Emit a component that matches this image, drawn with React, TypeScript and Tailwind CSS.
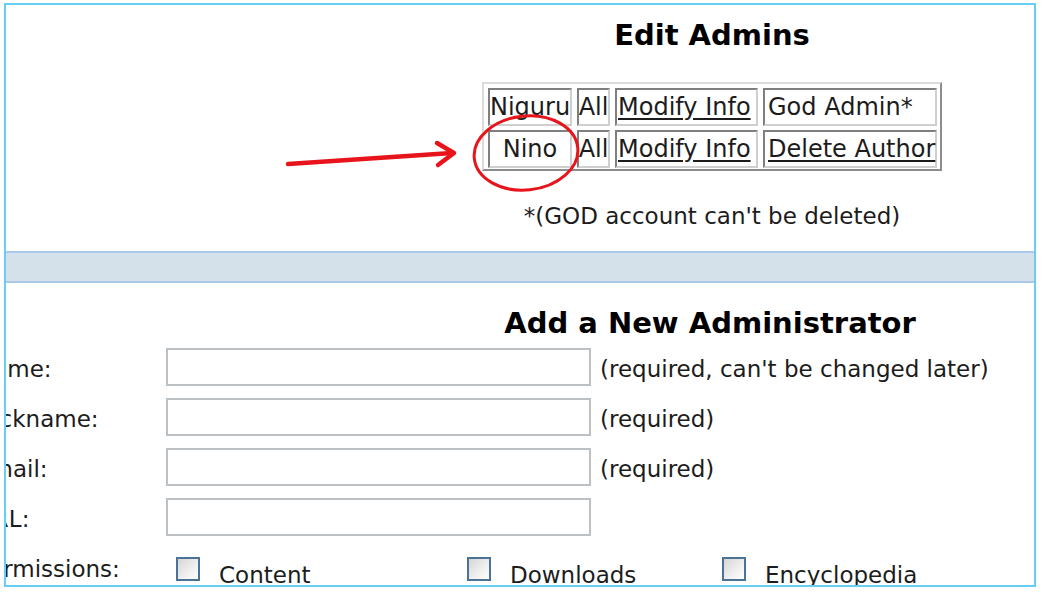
import React from 'react';

type AdminRow = {
  name: string;
  centerName?: boolean;
  level: string;
  action: string;
  actionIsLink: boolean;
};

const admins: AdminRow[] = [
  { name: 'Niguru', level: 'All', action: 'God Admin*', actionIsLink: false },
  { name: 'Nino', centerName: true, level: 'All', action: 'Delete Author', actionIsLink: true },
];

const fields = [
  { label: 'Name:', note: "(required, can't be changed later)" },
  { label: 'Nickname:', note: '(required)' },
  { label: 'Email:', note: '(required)' },
  { label: 'URL:', note: '' },
];

const permissions = [
  { label: 'Content', col: 'w-[291px]' },
  { label: 'Downloads', col: 'w-[255px]' },
  { label: 'Encyclopedia', col: 'w-[200px]' },
];

// inset cell, old-school table border look
const cellCls =
  'flex h-[38px] items-center whitespace-nowrap border-2 border-t-[#7f7f7f] border-l-[#7f7f7f] border-r-[#cfcfcf] border-b-[#cfcfcf] text-[24px] leading-none';

function AdminsTable() {
  return (
    <div className="mt-[32px] grid grid-cols-[84px_33px_143px_174px] gap-x-[5px] gap-y-[4px] border-2 border-t-[#dcdcdc] border-l-[#dcdcdc] border-r-[#8c8c8c] border-b-[#8c8c8c] pt-[4px] pl-[4px] pr-[3px] pb-[1px]">
      {admins.map((a) => (
        <React.Fragment key={a.name}>
          <div className={`${cellCls} ${a.centerName ? 'justify-center' : 'pl-0'}`}>{a.name}</div>
          <div className={`${cellCls} justify-center`}>{a.level}</div>
          <div className={`${cellCls} pl-[1px]`}>
            <span className="underline underline-offset-[3px]">Modify Info</span>
          </div>
          <div className={`${cellCls} pl-[3px]`}>
            <span className={a.actionIsLink ? 'underline underline-offset-[3px]' : ''}>{a.action}</span>
          </div>
        </React.Fragment>
      ))}
    </div>
  );
}

function Checkbox() {
  return (
    <span className="block h-[24px] w-[24px] shrink-0 border-2 border-[#4b7397] bg-gradient-to-br from-[#d6d6d6] via-[#ececec] to-white" />
  );
}

export default function App() {
  return (
    <div className="relative h-[592px] w-[1043px] overflow-hidden bg-white pt-[3px] pl-[4px] font-['DejaVu_Sans',sans-serif] text-[#1c1c1c]">
      <div className="h-[584px] w-[1032px] overflow-hidden border-2 border-[#66cff3]">
        {/* edit admins block */}
        <section className="flex flex-col items-center pl-[384px] pt-[16px]">
          <h1 className="text-[29px] font-bold leading-[29px] text-black">Edit Admins</h1>
          <AdminsTable />
          <p className="mt-[34px] text-[23px] leading-[23px]">*(GOD account can't be deleted)</p>
        </section>

        <div className="mt-[23px] h-[32px] border-y-2 border-[#abc8ea] bg-[#d4e1ea]" />

        {/* add admin form */}
        <section className="flex flex-col items-center pl-[380px] pt-[26px]">
          <h2 className="text-[29px] font-bold leading-[29px] text-black">Add a New Administrator</h2>
        </section>

        <div className="mt-[10px] ml-[-30px] flex flex-col gap-[12px]">
          {fields.map((f) => (
            <div key={f.label} className="flex items-center">
              <span className="w-[190px] shrink-0 pt-[5px] text-[23px] leading-none">{f.label}</span>
              <input
                type="text"
                className="h-[38px] w-[425px] shrink-0 border-2 border-[#bcc1c6] bg-white outline-none"
              />
              {f.note ? <span className="ml-[9px] pt-[5px] text-[23px] leading-none">{f.note}</span> : null}
            </div>
          ))}
          <div className="mt-[9px] flex items-start">
            <span className="w-[190px] shrink-0 pt-[1px] text-[23px] leading-none">Permissions:</span>
            {permissions.map((p) => (
              <div key={p.label} className={`${p.col} flex shrink-0 items-start pl-[10px]`}>
                <Checkbox />
                <span className="ml-[19px] pt-[7px] text-[23px] leading-none">{p.label}</span>
              </div>
            ))}
          </div>
        </div>
      </div>

      {/* red callout marks */}
      <svg
        className="pointer-events-none absolute top-0 left-0"
        width="1043"
        height="592"
        viewBox="0 0 1043 592"
        fill="none"
      >
        <path d="M288 164 L452 153" stroke="#e8141c" strokeWidth="4.5" strokeLinecap="round" />
        <path
          d="M437 143 L454 153 L438 165"
          stroke="#e8141c"
          strokeWidth="4.5"
          strokeLinecap="round"
          strokeLinejoin="round"
        />
        <ellipse
          cx="526"
          cy="153"
          rx="52"
          ry="37"
          transform="rotate(-6 526 153)"
          stroke="#e8141c"
          strokeWidth="3"
        />
      </svg>
    </div>
  );
}
